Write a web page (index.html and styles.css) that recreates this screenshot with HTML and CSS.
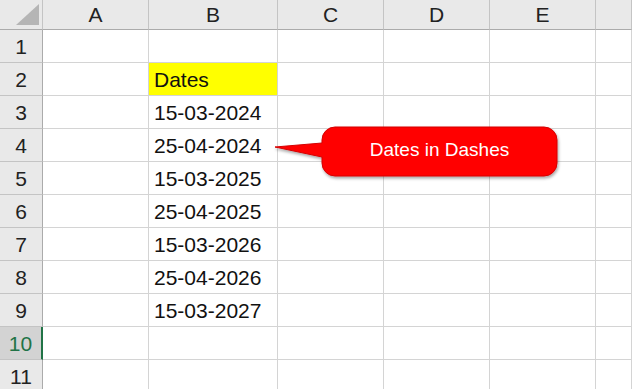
FILE: index.html
```html
<!DOCTYPE html>
<html lang="en">

<head>
  <meta charset="UTF-8">
  <meta name="viewport" content="width=device-width, initial-scale=1.0">
  <title>Dates in Dashes</title>
  <link rel="stylesheet" href="styles.css">
</head>

<body>
  <div class="sheet">
    <div class="grid">
      <!-- header row -->
      <div class="corner"><span class="corner-tri"></span></div>
      <div class="ch">A</div>
      <div class="ch">B</div>
      <div class="ch">C</div>
      <div class="ch">D</div>
      <div class="ch">E</div>
      <div class="ch"></div>

      <div class="rh">1</div>
      <div class="cell"></div><div class="cell"></div><div class="cell"></div><div class="cell"></div><div class="cell"></div><div class="cell"></div>

      <div class="rh">2</div>
      <div class="cell"></div><div class="cell fill">Dates</div><div class="cell"></div><div class="cell"></div><div class="cell"></div><div class="cell"></div>

      <div class="rh">3</div>
      <div class="cell"></div><div class="cell">15-03-2024</div><div class="cell"></div><div class="cell"></div><div class="cell"></div><div class="cell"></div>

      <div class="rh">4</div>
      <div class="cell"></div><div class="cell">25-04-2024</div><div class="cell"></div><div class="cell"></div><div class="cell"></div><div class="cell"></div>

      <div class="rh">5</div>
      <div class="cell"></div><div class="cell">15-03-2025</div><div class="cell"></div><div class="cell"></div><div class="cell"></div><div class="cell"></div>

      <div class="rh">6</div>
      <div class="cell"></div><div class="cell">25-04-2025</div><div class="cell"></div><div class="cell"></div><div class="cell"></div><div class="cell"></div>

      <div class="rh">7</div>
      <div class="cell"></div><div class="cell">15-03-2026</div><div class="cell"></div><div class="cell"></div><div class="cell"></div><div class="cell"></div>

      <div class="rh">8</div>
      <div class="cell"></div><div class="cell">25-04-2026</div><div class="cell"></div><div class="cell"></div><div class="cell"></div><div class="cell"></div>

      <div class="rh">9</div>
      <div class="cell"></div><div class="cell">15-03-2027</div><div class="cell"></div><div class="cell"></div><div class="cell"></div><div class="cell"></div>

      <div class="rh rh-active">10</div>
      <div class="cell"></div><div class="cell"></div><div class="cell"></div><div class="cell"></div><div class="cell"></div><div class="cell"></div>

      <div class="rh">11</div>
      <div class="cell"></div><div class="cell"></div><div class="cell"></div><div class="cell"></div><div class="cell"></div><div class="cell"></div>
    </div>

    <!-- callout shape floating over the sheet -->
    <svg class="callout" width="296" height="64" viewBox="0 0 296 64">
      <defs>
        <filter id="shadow" x="-10%" y="-20%" width="120%" height="150%">
          <feDropShadow dx="1" dy="2" stdDeviation="1.5" flood-color="#000" flood-opacity="0.35" />
        </filter>
      </defs>
      <path d="M 3 27 L 50 23 L 50 20 A 13 13 0 0 1 63 7 L 272 7 A 13 13 0 0 1 285 20 L 285 43 A 13 13 0 0 1 272 56 L 63 56 A 13 13 0 0 1 50 43 L 50 37 Z"
        fill="#ff0000" stroke="#d40000" stroke-width="1" filter="url(#shadow)" />
      <text x="167.5" y="36" class="callout-text" text-anchor="middle">Dates in Dashes</text>
    </svg>
  </div>
</body>

</html>
```

FILE: styles.css
```css
* {
  box-sizing: border-box;
}

body {
  margin: 0;
  background: #fff;
  font-family: 'Liberation Sans', Arial, sans-serif;
}

.sheet {
  position: relative;
  width: 632px;
  height: 389px;
  overflow: hidden;
}

.grid {
  display: grid;
  grid-template-columns: 43px 106px 129px 106px 106px 106px 1fr;
  grid-template-rows: 30px repeat(11, 33px);
  font-size: 21px;
  line-height: 24px;
  color: #111;
}

.corner,
.ch {
  background: #e9e9e9;
  border-right: 1px solid #c4c4c4;
  border-bottom: 1px solid #ababab;
}

.corner {
  position: relative;
}

.corner-tri {
  position: absolute;
  right: 3px;
  bottom: 4px;
  width: 0;
  height: 0;
  border-left: 23px solid transparent;
  border-bottom: 21px solid #b5b5b5;
}

.ch {
  display: flex;
  align-items: flex-end;
  justify-content: center;
  padding-bottom: 2px;
  color: #222;
}

.rh {
  display: flex;
  align-items: flex-end;
  justify-content: center;
  padding-bottom: 3px;
  background: #e9e9e9;
  border-right: 1px solid #ababab;
  border-bottom: 1px solid #c4c4c4;
  color: #222;
}

.rh-active {
  background: #d3d3d3;
  color: #217346;
  border-right: 2px solid #217346;
  padding-right: 0;
}

.cell {
  display: flex;
  align-items: flex-end;
  padding: 0 0 3px 5px;
  border-right: 1px solid #d4d4d4;
  border-bottom: 1px solid #d4d4d4;
  white-space: nowrap;
}

.fill {
  background: #ffff00;
}

.callout {
  position: absolute;
  left: 272px;
  top: 120px;
  overflow: visible;
}

.callout-text {
  font-family: 'Liberation Sans', Arial, sans-serif;
  font-size: 19px;
  fill: #fff;
}
```
